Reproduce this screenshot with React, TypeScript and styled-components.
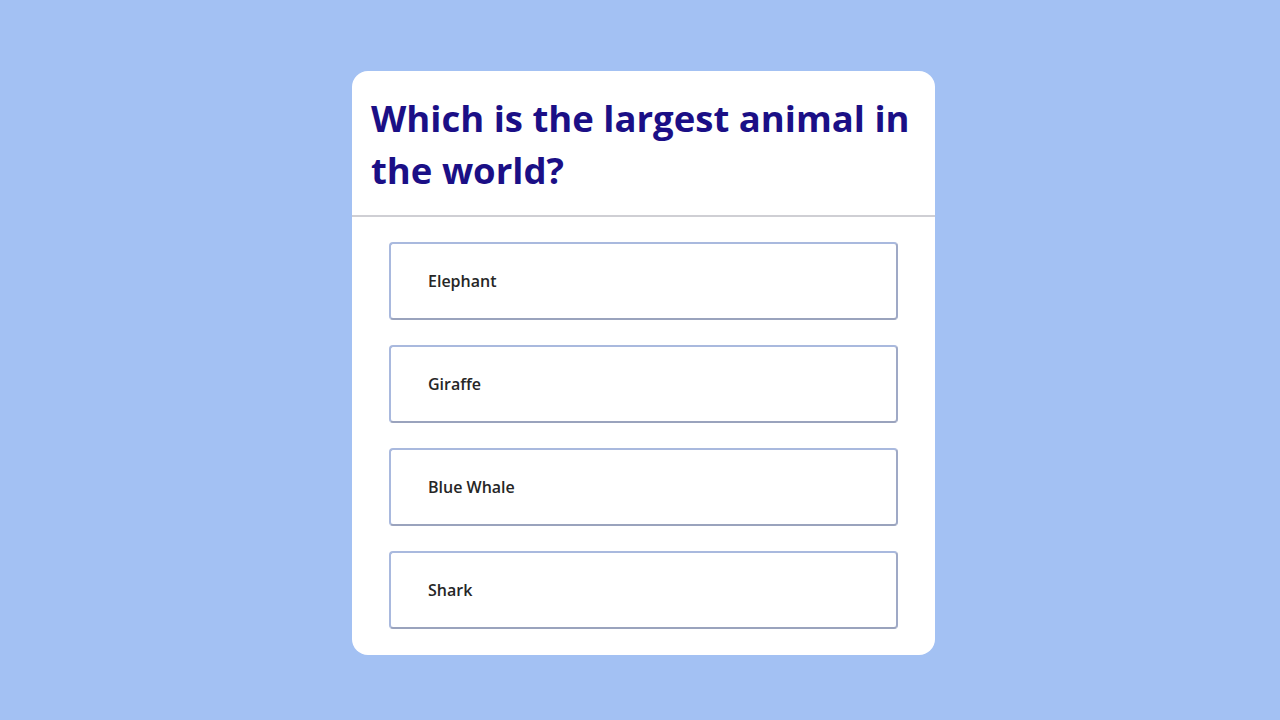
import styled, { createGlobalStyle } from "styled-components";

const GlobalStyle = createGlobalStyle`
  html, body {
    margin: 0;
    padding: 0;
    background: #a3c1f3;
  }
  body {
    font-family: "Open Sans", "Noto Sans", sans-serif;
  }
`;

const Page = styled.div`
  width: 1280px;
  height: 720px;
  display: flex;
  justify-content: flex-start;
  align-items: flex-start;
  padding: 71px 0 0 352px;
  box-sizing: border-box;
`;

const Card = styled.div`
  width: 583px;
  background: #ffffff;
  border-radius: 16px;
  overflow: hidden;
`;

const Header = styled.div`
  padding: 21px 12px 19px 19px;
  border-bottom: 2px solid #cfcfd4;
`;

const Question = styled.h1`
  margin: 0;
  font-family: "Open Sans", sans-serif;
  font-weight: 700;
  font-size: 36.5px;
  line-height: 52px;
  color: #1b0f86;
`;

const Options = styled.div`
  display: flex;
  flex-direction: column;
  gap: 25px;
  padding: 25px 37px 26px 37px;
`;

const Option = styled.button`
  height: 78px;
  width: 100%;
  display: flex;
  align-items: center;
  padding: 0 0 0 37px;
  box-sizing: border-box;
  background: #ffffff;
  border: 2px solid #a9b9de;
  border-bottom-color: #9aa3bd;
  border-right-color: #9fa9c6;
  border-radius: 4px;
  font-family: "Open Sans", sans-serif;
  font-size: 16px;
  font-weight: 600;
  color: #262626;
  cursor: pointer;
  text-align: left;
`;

const answers = ["Elephant", "Giraffe", "Blue Whale", "Shark"];

export default function App() {
  return (
    <>
      <GlobalStyle />
      <Page>
        <Card>
          <Header>
            <Question>Which is the largest animal in the world?</Question>
          </Header>
          <Options>
            {answers.map((a) => (
              <Option key={a}>{a}</Option>
            ))}
          </Options>
        </Card>
      </Page>
    </>
  );
}
